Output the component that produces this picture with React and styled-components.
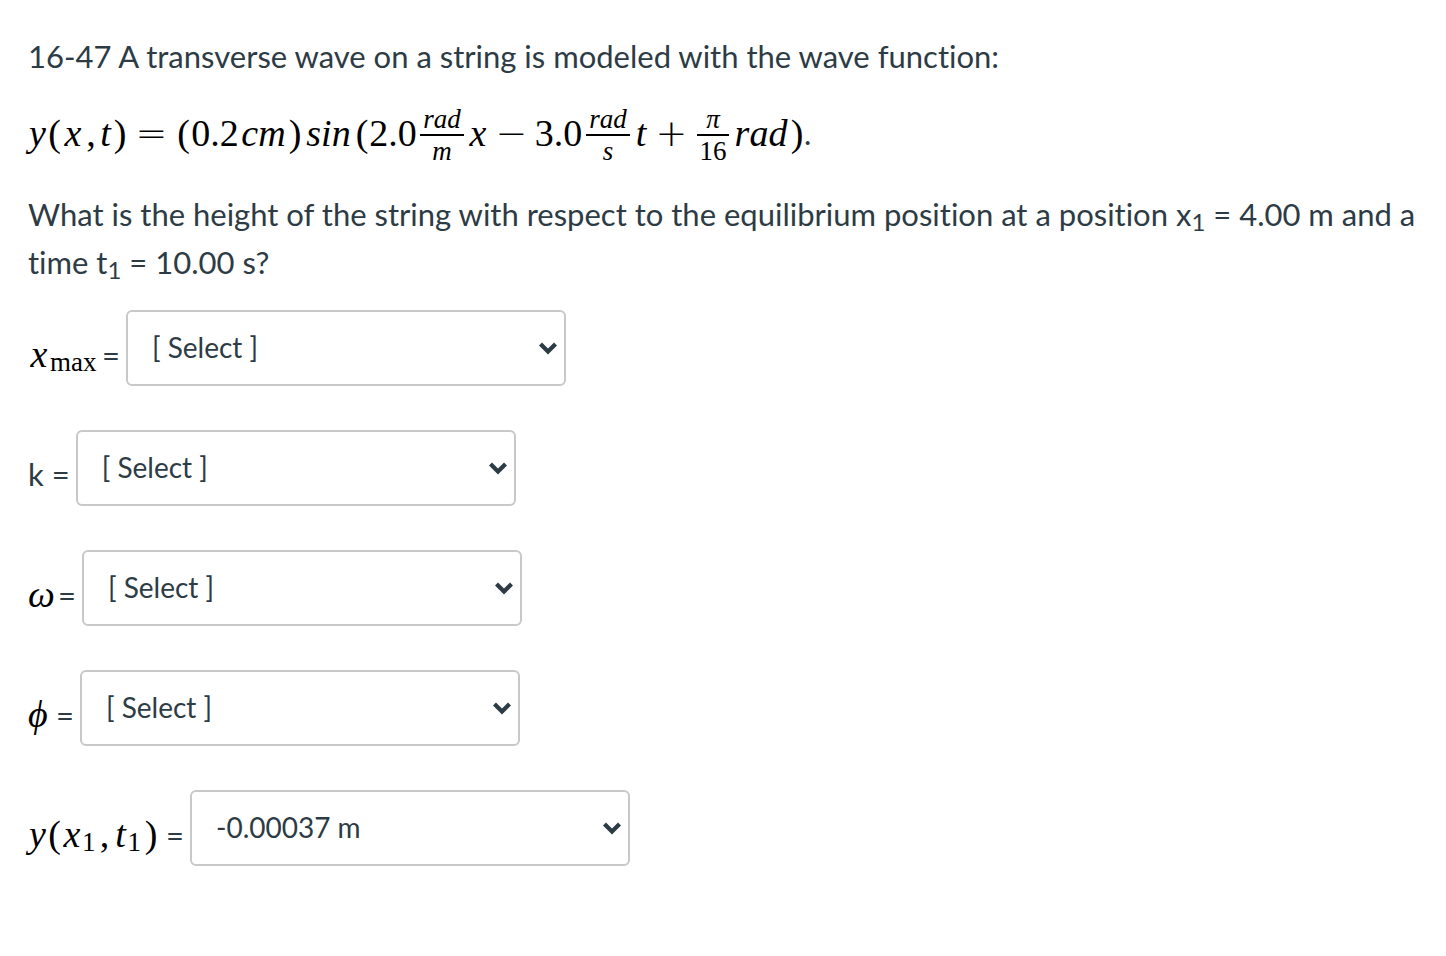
import React, { useState } from "react";
import styled, { createGlobalStyle } from "styled-components";

function Frac({ top, bottom, w }) {
  return <Fraction $w={w}>
    <Numerator>{top}</Numerator>
    <Denominator>{bottom}</Denominator>
  </Fraction>;
}

function Answer({ id, value, symbol, width }) {
  const [answer, setAnswer] = useState(value);
  return <Row>
    <Label htmlFor={id}>
      {width ? <MathLabel $w={width}>{symbol}</MathLabel> : symbol}
      <span>=</span>
    </Label>
    <SelectBox>
      <Select id={id} value={answer} onChange={(e) => setAnswer(e.target.value)}>
        <option>{value}</option>
      </Select>
      <Arrow viewBox="0 0 18 12" aria-hidden="true">
        <path d="M1.5 2 L9 9.5 L16.5 2" fill="none" stroke="#2d3b45" strokeWidth="4.2" />
      </Arrow>
    </SelectBox>
  </Row>;
}

export default () => {
  return <Wrapper>
    <GlobalStyle />
    <Text>16-47 A transverse wave on a string is modeled with the wave function:</Text>
    <Formula>
      <Term $w={19}><Var>y</Var></Term>
      <Term $w={15}>(</Term>
      <Term $w={22}><Var>x</Var></Term>
      <Term $w={14}>,</Term>
      <Term $w={15}><Var>t</Var></Term>
      <Term $w={14}>)</Term>
      <Operator $w={49}>=</Operator>
      <Term $w={15}>(</Term>
      <Term $w={48}>0.2</Term>
      <Term $w={49}><Var>cm</Var></Term>
      <Term $w={14}>)</Term>
      <Term $w={53}><Var>sin</Var></Term>
      <Term $w={14}>(</Term>
      <Term $w={48}>2.0</Term>
      <Frac w={44} top={<Var>rad</Var>} bottom={<Var>m</Var>} />
      <Term $w={22}><Var>x</Var></Term>
      <Operator $w={45}>−</Operator>
      <Term $w={49}>3.0</Term>
      <Frac w={44} top={<Var>rad</Var>} bottom={<Var>s</Var>} />
      <Term $w={16}><Var>t</Var></Term>
      <Operator $w={45}>+</Operator>
      <Frac w={32} top={<Var>π</Var>} bottom="16" />
      <Term $w={58}><Var>rad</Var></Term>
      <Term $w={14}>)</Term>
      <Stop>.</Stop>
    </Formula>
    <Text>
      What is the height of the string with respect to the equilibrium position at a position
      x<TextSub>1</TextSub> = 4.00 m and a time t<TextSub>1</TextSub> = 10.00 s?
    </Text>
    <Answers>
      {fields.map((field) => <Answer key={field.id} {...field} />)}
    </Answers>
  </Wrapper>;
};

const GlobalStyle = createGlobalStyle`
  body {
    margin: 0;
    background-color: #ffffff;
  }
  * {
    box-sizing: border-box;
  }
`;

const Wrapper = styled.main`
  padding: 32px 14px 40px 28px;
  font-family: Lato, "Liberation Sans", sans-serif;
  font-size: 31px;
  line-height: 48px;
  font-variant-ligatures: none;
  color: #2d3b45;
`;

const Text = styled.p`
  margin: 0;
`;

const TextSub = styled.sub`
  font-size: 24px;
  line-height: 0;
  vertical-align: -5px;
`;

const Formula = styled.div`
  display: flex;
  align-items: center;
  height: 62px;
  margin: 22px 0 26px;
  font-family: "Liberation Serif", serif;
  font-size: 38px;
  color: #000000;
`;

const Term = styled.span`
  flex: none;
  display: inline-flex;
  justify-content: center;
  width: ${(props) => props.$w}px;
`;

const Operator = styled(Term)`
  font-family: "DejaVu Sans", sans-serif;
  font-weight: 200;
`;

const Var = styled.i`
  font-style: italic;
`;

const Sub = styled.sub`
  font-size: 27px;
  line-height: 0;
  vertical-align: -4px;
`;

const Stop = styled.span`
  font-family: Lato, sans-serif;
  font-size: 31px;
  color: #2d3b45;
`;

const Fraction = styled.span`
  flex: none;
  display: flex;
  flex-direction: column;
  width: ${(props) => props.$w}px;
  margin: 0 3px;
  padding-top: 3px;
  font-size: 27px;
  line-height: 30px;
  text-align: center;
`;

const Numerator = styled.span`
  border-bottom: 2px solid #000000;
`;

const Denominator = styled.span`
  display: block;
`;

const Answers = styled.form`
  display: flex;
  flex-direction: column;
  gap: 44px;
  margin-top: 24px;
`;

const Row = styled.div`
  display: flex;
  align-items: center;
  gap: 6px;
`;

const Label = styled.label`
  display: flex;
  align-items: baseline;
  padding-top: 12px;
`;

const MathLabel = styled.span`
  width: ${(props) => props.$w}px;
  font-family: "Liberation Serif", serif;
  font-size: 38px;
  white-space: nowrap;
  color: #000000;
`;

const SelectBox = styled.div`
  position: relative;
  width: 440px;
`;

const Select = styled.select`
  display: block;
  width: 100%;
  height: 76px;
  padding: 0 48px 2px 24px;
  border: 2px solid #c8c8c8;
  border-radius: 6px;
  background-color: #ffffff;
  font-family: inherit;
  font-size: 28px;
  color: #2d3b45;
  appearance: none;
`;

const Arrow = styled.svg`
  position: absolute;
  top: 32px;
  right: 9px;
  width: 18px;
  height: 12px;
  overflow: visible;
  pointer-events: none;
`;

const fields = [
  {
    id: "xmax",
    value: "[ Select ]",
    width: 74,
    symbol: <>
      <Term $w={22}><Var>x</Var></Term>
      <Sub>max</Sub>
    </>,
  },
  { id: "k", value: "[ Select ]", symbol: <>k&nbsp;</> },
  { id: "omega", value: "[ Select ]", width: 30, symbol: <Var>ω</Var> },
  { id: "phi", value: "[ Select ]", width: 28, symbol: <Var>ϕ</Var> },
  {
    id: "y1",
    value: "-0.00037 m",
    width: 138,
    symbol: <>
      <Term $w={19}><Var>y</Var></Term>
      <Term $w={15}>(</Term>
      <Term $w={20}><Var>x</Var></Term>
      <Sub>1</Sub>
      <Term $w={18}>,</Term>
      <Term $w={14}><Var>t</Var></Term>
      <Sub>1</Sub>
      <Term $w={20}>)</Term>
    </>,
  },
];
